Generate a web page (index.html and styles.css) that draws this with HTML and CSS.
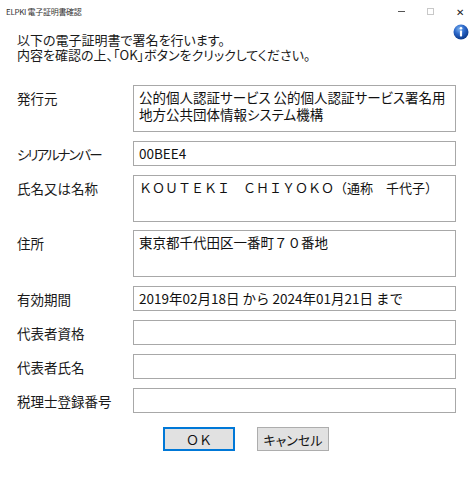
FILE: index.html
```html
<!DOCTYPE html>
<html lang="ja">
<head>
    <meta charset="UTF-8">
    <meta name="viewport" content="width=device-width, initial-scale=1.0">
    <link rel="stylesheet" href="styles.css">
    <title>ELPKI 電子証明書確認</title>
</head>
<body>

<div class="window">
    <div class="titlebar">
        <span class="title">ELPKI 電子証明書確認</span>
        <div class="controls">
            <span class="ctl-min"></span>
            <span class="ctl-max"></span>
            <span class="ctl-close">✕</span>
        </div>
    </div>

    <div class="header">
        <p class="message">以下の電子証明書で署名を行います。<br>内容を確認の上、「OK」ボタンをクリックしてください。</p>
        <svg class="info-icon" width="16" height="16" viewBox="0 0 16 16">
            <defs>
                <radialGradient id="infoGrad" cx="40%" cy="30%" r="70%">
                    <stop offset="0" stop-color="#7fb4f0"/>
                    <stop offset="0.5" stop-color="#2a66c8"/>
                    <stop offset="1" stop-color="#0d3a8a"/>
                </radialGradient>
            </defs>
            <circle cx="8" cy="8" r="7.5" fill="url(#infoGrad)"/>
            <circle cx="8" cy="4.3" r="1.3" fill="#fff"/>
            <rect x="6.9" y="6.4" width="2.2" height="6" rx="0.6" fill="#fff"/>
        </svg>
    </div>

    <div class="form">
        <div class="label">発行元</div>
        <div class="field tall issuer">公的個人認証サービス 公的個人認証サービス署名用<br>地方公共団体情報システム機構</div>

        <div class="label kana">シリアルナンバー</div>
        <div class="field">00BEE4</div>

        <div class="label">氏名又は名称</div>
        <div class="field tall name">ＫＯＵＴＥＫＩ　ＣＨＩＹＯＫＯ（通称　千代子）</div>

        <div class="label">住所</div>
        <div class="field tall">東京都千代田区一番町７０番地</div>

        <div class="label">有効期間</div>
        <div class="field">2019年02月18日 から 2024年01月21日 まで</div>

        <div class="label">代表者資格</div>
        <div class="field"></div>

        <div class="label">代表者氏名</div>
        <div class="field"></div>

        <div class="label">税理士登録番号</div>
        <div class="field"></div>
    </div>

    <div class="buttons">
        <button class="btn btn-default">ＯＫ</button>
        <button class="btn">キャンセル</button>
    </div>
</div>

</body>
</html>
```

FILE: styles.css
```css
body {
    margin: 0;
    background-color: #fff;
    color: #000;
    font-family: "Noto Sans CJK JP", "Liberation Sans", sans-serif;
}

.window {
    width: 474px;
    height: 478px;
    box-sizing: border-box;
}

/* タイトルバー */
.titlebar {
    height: 22px;
    display: flex;
    align-items: center;
    justify-content: space-between;
    padding: 0 0 0 6px;
}

.title {
    font-size: 8px;
    color: #333;
    letter-spacing: -0.3px;
}

.controls {
    display: flex;
    align-items: center;
    height: 22px;
}

.controls span {
    width: 29px;
    display: flex;
    justify-content: center;
    align-items: center;
}

.ctl-min::before {
    content: "";
    width: 7px;
    height: 1px;
    background-color: #555;
}

.ctl-max::before {
    content: "";
    width: 5px;
    height: 5px;
    border: 1px solid #c8c8c8;
}

.ctl-close {
    font-size: 10px;
    color: #222;
}

/* メッセージ */
.header {
    display: flex;
    justify-content: space-between;
    align-items: flex-start;
    padding: 0 5px 0 17px;
}

.message {
    margin: 10px 0 0 0;
    font-size: 13px;
    line-height: 15px;
    font-feature-settings: "palt";
    color: #1a1a1a;
}

.info-icon {
    margin-top: 2px;
}

/* 証明書情報 */
.form {
    display: grid;
    grid-template-columns: 116px 323px;
    row-gap: 8.5px;
    margin: 23px 0 0 17px;
}

.label {
    font-size: 13.5px;
    line-height: 17px;
    padding-top: 5px;
    font-feature-settings: "palt";
    color: #1a1a1a;
}

.label.kana {
    letter-spacing: -2px;
}

.field {
    height: 25.5px;
    box-sizing: border-box;
    border: 1px solid #a8a8a8;
    padding: 3px 5px;
    font-size: 13.5px;
    line-height: 17px;
    color: #111;
    white-space: nowrap;
    overflow: hidden;
}

.field.tall {
    height: 47px;
}

.field.issuer {
    font-feature-settings: "palt";
}

.field.name {
    font-size: 13px;
}

/* ボタン */
.buttons {
    display: flex;
    gap: 22px;
    margin: 14px 0 0 163px;
}

.btn {
    width: 72px;
    height: 24px;
    box-sizing: border-box;
    background-color: #e1e1e1;
    border: 1px solid #adadad;
    font-family: "Noto Sans CJK JP", sans-serif;
    font-size: 13px;
    font-feature-settings: "palt";
    color: #111;
    padding: 0;
}

.btn-default {
    border: 2px solid #0078d7;
    font-feature-settings: normal;
}
```
